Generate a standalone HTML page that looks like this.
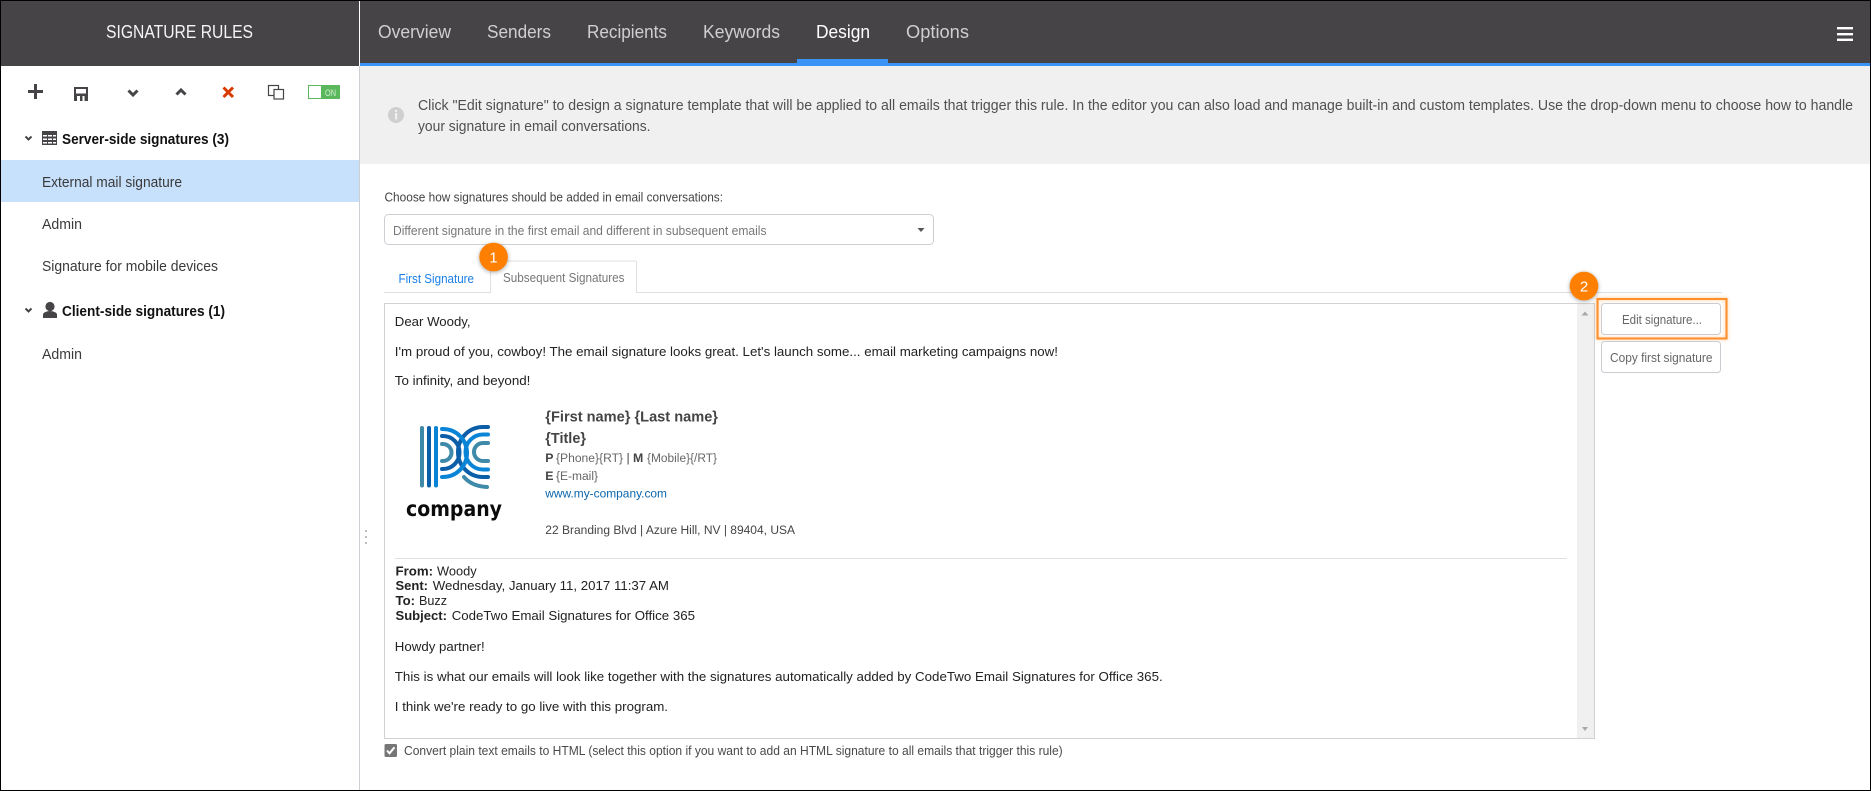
<!DOCTYPE html>
<html lang="en"><head><meta charset="utf-8"><title>Signature Rules</title>
<style>
html,body{margin:0;padding:0;width:1871px;height:791px;overflow:hidden;background:#fff}
svg{display:block}
text{font-family:"Liberation Sans",Arial,sans-serif;white-space:pre}
.nav{font-size:18.5px;fill:#cfcfcf}
.tree{font-size:14.5px;fill:#3a3a3a}
.b{font-weight:700}
.info{font-size:14.5px;fill:#505050}
.ui{font-size:12.5px;fill:#555}
.mail{font-size:13.3px;fill:#222}
.sig{font-size:12.3px;fill:#444}
.sb{font-size:15px;font-weight:700;fill:#444}
.arc{fill:none;stroke-width:4;stroke-linecap:round}
</style></head><body>
<svg xmlns="http://www.w3.org/2000/svg" width="1871" height="791" viewBox="0 0 1871 791">
<rect width="1871" height="791" fill="#fff"/>
<!-- header -->
<rect x="0" y="0" width="1871" height="66" fill="#464447"/>
<rect x="360" y="63" width="1511" height="3" fill="#3b93f5"/>
<rect x="797" y="59" width="91" height="7" fill="#3b93f5"/>
<rect x="359" y="0" width="1" height="66" fill="#fff"/>
<text x="106" y="38" font-size="18" fill="#f4f4f4" textLength="147" lengthAdjust="spacingAndGlyphs">SIGNATURE RULES</text>
<text class="nav" x="378" y="38" textLength="73" lengthAdjust="spacingAndGlyphs">Overview</text>
<text class="nav" x="487" y="38" textLength="64" lengthAdjust="spacingAndGlyphs">Senders</text>
<text class="nav" x="587" y="38" textLength="80" lengthAdjust="spacingAndGlyphs">Recipients</text>
<text class="nav" x="703" y="38" textLength="77" lengthAdjust="spacingAndGlyphs">Keywords</text>
<text class="nav" x="816" y="38" textLength="54" lengthAdjust="spacingAndGlyphs" style="fill:#fff">Design</text>
<text class="nav" x="906" y="38" textLength="63" lengthAdjust="spacingAndGlyphs">Options</text>
<g fill="#fff"><rect x="1837" y="27" width="16" height="2.4"/><rect x="1837" y="33" width="16" height="2.4"/><rect x="1837" y="38.6" width="16" height="2.4"/></g>
<!-- left panel -->
<rect x="359" y="66" width="1" height="725" fill="#ccd0d4"/>
<rect x="1" y="160" width="358" height="42" fill="#c7e0fb"/>
<!-- toolbar -->
<path d="M35.500 84v15M28 91.500h15" stroke="#464447" stroke-width="3" fill="none"/>
<path d="M74 87h14v14h-3.500v-5h-7.500v5H74z" fill="#464447"/>
<rect x="76" y="89" width="10" height="4.500" fill="#fff"/>
<rect x="80" y="96" width="2.500" height="5" fill="#464447"/>
<path d="M128.500 90.500l4.500 4.500 4.500-4.500" stroke="#464447" stroke-width="3" fill="none"/>
<path d="M176.500 94.500l4.500-4.500 4.500 4.500" stroke="#464447" stroke-width="3" fill="none"/>
<path d="M223.500 87.500l9.500 9.500M233 87.500l-9.500 9.500" stroke="#d83b01" stroke-width="3" fill="none"/>
<rect x="268.500" y="85.500" width="10" height="10" fill="#fff" stroke="#464447" stroke-width="1.200"/>
<rect x="274" y="89.500" width="9.500" height="9.500" fill="#fff" stroke="#464447" stroke-width="1.200"/>
<rect x="308" y="85" width="32" height="14" fill="#5cb85c"/>
<rect x="309" y="86" width="12" height="12" fill="#fff"/>
<text x="325" y="96" font-size="9.500" fill="#d6efd6" textLength="11" lengthAdjust="spacingAndGlyphs">ON</text>
<!-- tree -->
<path d="M25.500 136.500l3 3 3-3" stroke="#464447" stroke-width="2" fill="none"/>
<rect x="42" y="131" width="15" height="14" fill="#464447"/>
<g fill="#fff"><rect x="43" y="135" width="4" height="1.500"/><rect x="48" y="135" width="4" height="1.500"/><rect x="53" y="135" width="3" height="1.500"/><rect x="43" y="138.500" width="4" height="1.500"/><rect x="48" y="138.500" width="4" height="1.500"/><rect x="53" y="138.500" width="3" height="1.500"/><rect x="43" y="142" width="4" height="1.500"/><rect x="48" y="142" width="4" height="1.500"/><rect x="53" y="142" width="3" height="1.500"/></g>
<text class="tree b" x="62" y="144" textLength="167" lengthAdjust="spacingAndGlyphs" style="fill:#111">Server-side signatures (3)</text>
<text class="tree" x="42" y="187" textLength="140" lengthAdjust="spacingAndGlyphs">External mail signature</text>
<text class="tree" x="42" y="229" textLength="40" lengthAdjust="spacingAndGlyphs">Admin</text>
<text class="tree" x="42" y="271" textLength="176" lengthAdjust="spacingAndGlyphs">Signature for mobile devices</text>
<path d="M25.500 308.500l3 3 3-3" stroke="#464447" stroke-width="2" fill="none"/>
<circle cx="50" cy="306.500" r="4.600" fill="#464447"/>
<path d="M43 318v-3.500c0-2 4-3.500 7-3.500s7 1.500 7 3.500V318z" fill="#464447"/>
<text class="tree b" x="62" y="316" textLength="163" lengthAdjust="spacingAndGlyphs" style="fill:#111">Client-side signatures (1)</text>
<text class="tree" x="42" y="359" textLength="40" lengthAdjust="spacingAndGlyphs">Admin</text>
<!-- splitter -->
<g fill="#bdbdbd"><rect x="365" y="530" width="2" height="2"/><rect x="365" y="536" width="2" height="2"/><rect x="365" y="542" width="2" height="2"/></g>
<!-- info band -->
<rect x="360" y="66" width="1510" height="98" fill="#f0f0f0"/>
<circle cx="396" cy="115" r="8" fill="#cfcfcf"/>
<rect x="395" y="113" width="2.200" height="6.500" fill="#f0f0f0"/><rect x="395" y="110" width="2.200" height="2" fill="#f0f0f0"/>
<text class="info" x="418" y="110" textLength="1435" lengthAdjust="spacingAndGlyphs">Click "Edit signature" to design a signature template that will be applied to all emails that trigger this rule. In the editor you can also load and manage built-in and custom templates. Use the drop-down menu to choose how to handle</text>
<text class="info" x="418" y="131" textLength="232.500" lengthAdjust="spacingAndGlyphs">your signature in email conversations.</text>
<!-- select -->
<text class="ui" x="384.500" y="201.500" textLength="338.500" lengthAdjust="spacingAndGlyphs" style="fill:#444">Choose how signatures should be added in email conversations:</text>
<rect x="384.500" y="214.500" width="549" height="30" rx="4" fill="#fff" stroke="#ccd0d4"/>
<text class="ui" x="393" y="235" textLength="373.500" lengthAdjust="spacingAndGlyphs" style="fill:#777">Different signature in the first email and different in subsequent emails</text>
<path d="M917.500 228h7l-3.500 4z" fill="#555"/>
<!-- tabs -->
<path d="M384 292.500H490.500V262.500a1.500 1.500 0 0 1 1.500-1.500H635a1.500 1.500 0 0 1 1.500 1.500V292.500H1722" fill="none" stroke="#dcdfe3"/>
<text class="ui" x="398.500" y="283" textLength="75.500" lengthAdjust="spacingAndGlyphs" style="fill:#1a7fe8">First Signature</text>
<text class="ui" x="503" y="282" textLength="121.500" lengthAdjust="spacingAndGlyphs" style="fill:#777">Subsequent Signatures</text>
<!-- mail box -->
<rect x="384.500" y="303.500" width="1210" height="435" fill="#fff" stroke="#d2d2d2"/>
<rect x="1577" y="304" width="17" height="434" fill="#f0f0f0"/>
<path d="M1581.500 315.500l3.500-4 3.500 4z" fill="#a8a8a8"/>
<path d="M1582 727h6l-3 4z" fill="#a8a8a8"/>
<text class="mail" x="394.800" y="326" textLength="75.800" lengthAdjust="spacingAndGlyphs">Dear Woody,</text>
<text class="mail" x="394.800" y="356" textLength="663.200" lengthAdjust="spacingAndGlyphs">I'm proud of you, cowboy! The email signature looks great. Let's launch some... email marketing campaigns now!</text>
<text class="mail" x="394.800" y="385" textLength="135.600" lengthAdjust="spacingAndGlyphs">To infinity, and beyond!</text>
<!-- logo -->
<rect x="420" y="426" width="4" height="61.500" rx="2" fill="#3f8aa8"/>
<rect x="427" y="426" width="4" height="61.500" rx="2" fill="#0b5ea8"/>
<rect x="434" y="426" width="4" height="61.500" rx="2" fill="#0a84d6"/>
<path class="arc" stroke="#0b5ea8" d="M488 427h-5a25 25 0 0 0 0 50h5"/>
<path class="arc" stroke="#0a84d6" d="M488 434.500h-5a17.500 17.500 0 0 0 0 35h5"/>
<path class="arc" stroke="#3f8aa8" d="M488 443h-5a9 9 0 0 0 0 18h5"/>
<path class="arc" stroke="#0a84d6" d="M442 429h1a24 24 0 0 1 0 48h-1"/>
<path class="arc" stroke="#0b5ea8" d="M442 436h1a16.500 16.500 0 0 1 0 33h-1"/>
<path class="arc" stroke="#3f8aa8" d="M442 444h1a8.500 8.500 0 0 1 0 17h-1"/>
<path class="arc" stroke="#3f8aa8" d="M464 477c5 6 13 9.500 23 10"/>
<text x="406" y="516" font-size="21" font-weight="700" fill="#0b0b0b" textLength="96" lengthAdjust="spacingAndGlyphs" style="font-family:'DejaVu Sans',sans-serif">company</text>
<!-- signature -->
<text class="sb" x="545.300" y="421.500" textLength="172.700" lengthAdjust="spacingAndGlyphs">{First name} {Last name}</text>
<text class="sb" x="545.300" y="443" textLength="40.700" lengthAdjust="spacingAndGlyphs">{Title}</text>
<text class="sig" x="545.300" y="462" style="font-weight:700">P</text>
<text class="sig" x="556" y="462" textLength="67" lengthAdjust="spacingAndGlyphs" style="fill:#666">{Phone}{RT}</text>
<text class="sig" x="626.500" y="462">|</text>
<text class="sig" x="633" y="462" style="font-weight:700">M</text>
<text class="sig" x="647" y="462" textLength="70" lengthAdjust="spacingAndGlyphs" style="fill:#666">{Mobile}{/RT}</text>
<text class="sig" x="545.300" y="480" style="font-weight:700">E</text>
<text class="sig" x="556" y="480" textLength="42" lengthAdjust="spacingAndGlyphs" style="fill:#666">{E-mail}</text>
<text class="sig" x="545.300" y="497.500" textLength="121.700" lengthAdjust="spacingAndGlyphs" style="fill:#0b66ad">www.my-company.com</text>
<text class="sig" x="545.300" y="534" textLength="249.700" lengthAdjust="spacingAndGlyphs">22 Branding Blvd | Azure Hill, NV | 89404, USA</text>
<rect x="395" y="558" width="1172" height="1" fill="#e0e0e0"/>
<!-- quoted -->
<text class="mail b" x="395.500" y="575.300" textLength="37.500" lengthAdjust="spacingAndGlyphs">From:</text>
<text class="mail" x="437" y="575.300" textLength="39.700" lengthAdjust="spacingAndGlyphs">Woody</text>
<text class="mail b" x="395.500" y="590" textLength="32.500" lengthAdjust="spacingAndGlyphs">Sent:</text>
<text class="mail" x="432.700" y="590" textLength="236.300" lengthAdjust="spacingAndGlyphs">Wednesday, January 11, 2017 11:37 AM</text>
<text class="mail b" x="395.500" y="605" textLength="19.500" lengthAdjust="spacingAndGlyphs">To:</text>
<text class="mail" x="419" y="605" textLength="28" lengthAdjust="spacingAndGlyphs">Buzz</text>
<text class="mail b" x="395.500" y="620" textLength="51.500" lengthAdjust="spacingAndGlyphs">Subject:</text>
<text class="mail" x="451.700" y="620" textLength="243.300" lengthAdjust="spacingAndGlyphs">CodeTwo Email Signatures for Office 365</text>
<text class="mail" x="394.800" y="651" textLength="89.900" lengthAdjust="spacingAndGlyphs">Howdy partner!</text>
<text class="mail" x="394.800" y="681" textLength="767.900" lengthAdjust="spacingAndGlyphs">This is what our emails will look like together with the signatures automatically added by CodeTwo Email Signatures for Office 365.</text>
<text class="mail" x="394.800" y="711" textLength="273.200" lengthAdjust="spacingAndGlyphs">I think we're ready to go live with this program.</text>
<!-- checkbox -->
<rect x="384.500" y="744" width="12.500" height="13" rx="1.500" fill="#767676"/>
<path d="M387 750.500l2.500 2.800 5-6" stroke="#fff" stroke-width="2" fill="none"/>
<text class="ui" x="404" y="755" textLength="658.700" lengthAdjust="spacingAndGlyphs" style="fill:#4a4a4a">Convert plain text emails to HTML (select this option if you want to add an HTML signature to all emails that trigger this rule)</text>
<!-- buttons -->
<rect x="1597.500" y="299" width="129" height="39.500" fill="none" stroke="#ff8f2a" stroke-width="2.100" style="filter:drop-shadow(0 0 2px rgba(255,140,30,.45))"/>
<rect x="1601.500" y="303.500" width="119" height="31" rx="3" fill="#fff" stroke="#c9ccd0"/>
<text class="ui" x="1622" y="324" textLength="80" lengthAdjust="spacingAndGlyphs" style="fill:#666">Edit signature...</text>
<rect x="1601.500" y="341.500" width="119" height="31" rx="3" fill="#fff" stroke="#c9ccd0"/>
<text class="ui" x="1610" y="362" textLength="102.500" lengthAdjust="spacingAndGlyphs" style="fill:#666">Copy first signature</text>
<!-- badges -->
<g style="filter:drop-shadow(0 1px 2px rgba(0,0,0,.35))">
<circle cx="493.600" cy="257" r="14.300" fill="#ff7f00"/>
<circle cx="1584" cy="286" r="14.300" fill="#ff7f00"/>
</g>
<text x="493.600" y="262.500" font-size="15" fill="#fff" text-anchor="middle">1</text>
<text x="1584" y="291.500" font-size="15" fill="#fff" text-anchor="middle">2</text>
<!-- outer frame -->
<rect x="0.500" y="0.500" width="1870" height="790" fill="none" stroke="#000"/>
</svg>
</body></html>
